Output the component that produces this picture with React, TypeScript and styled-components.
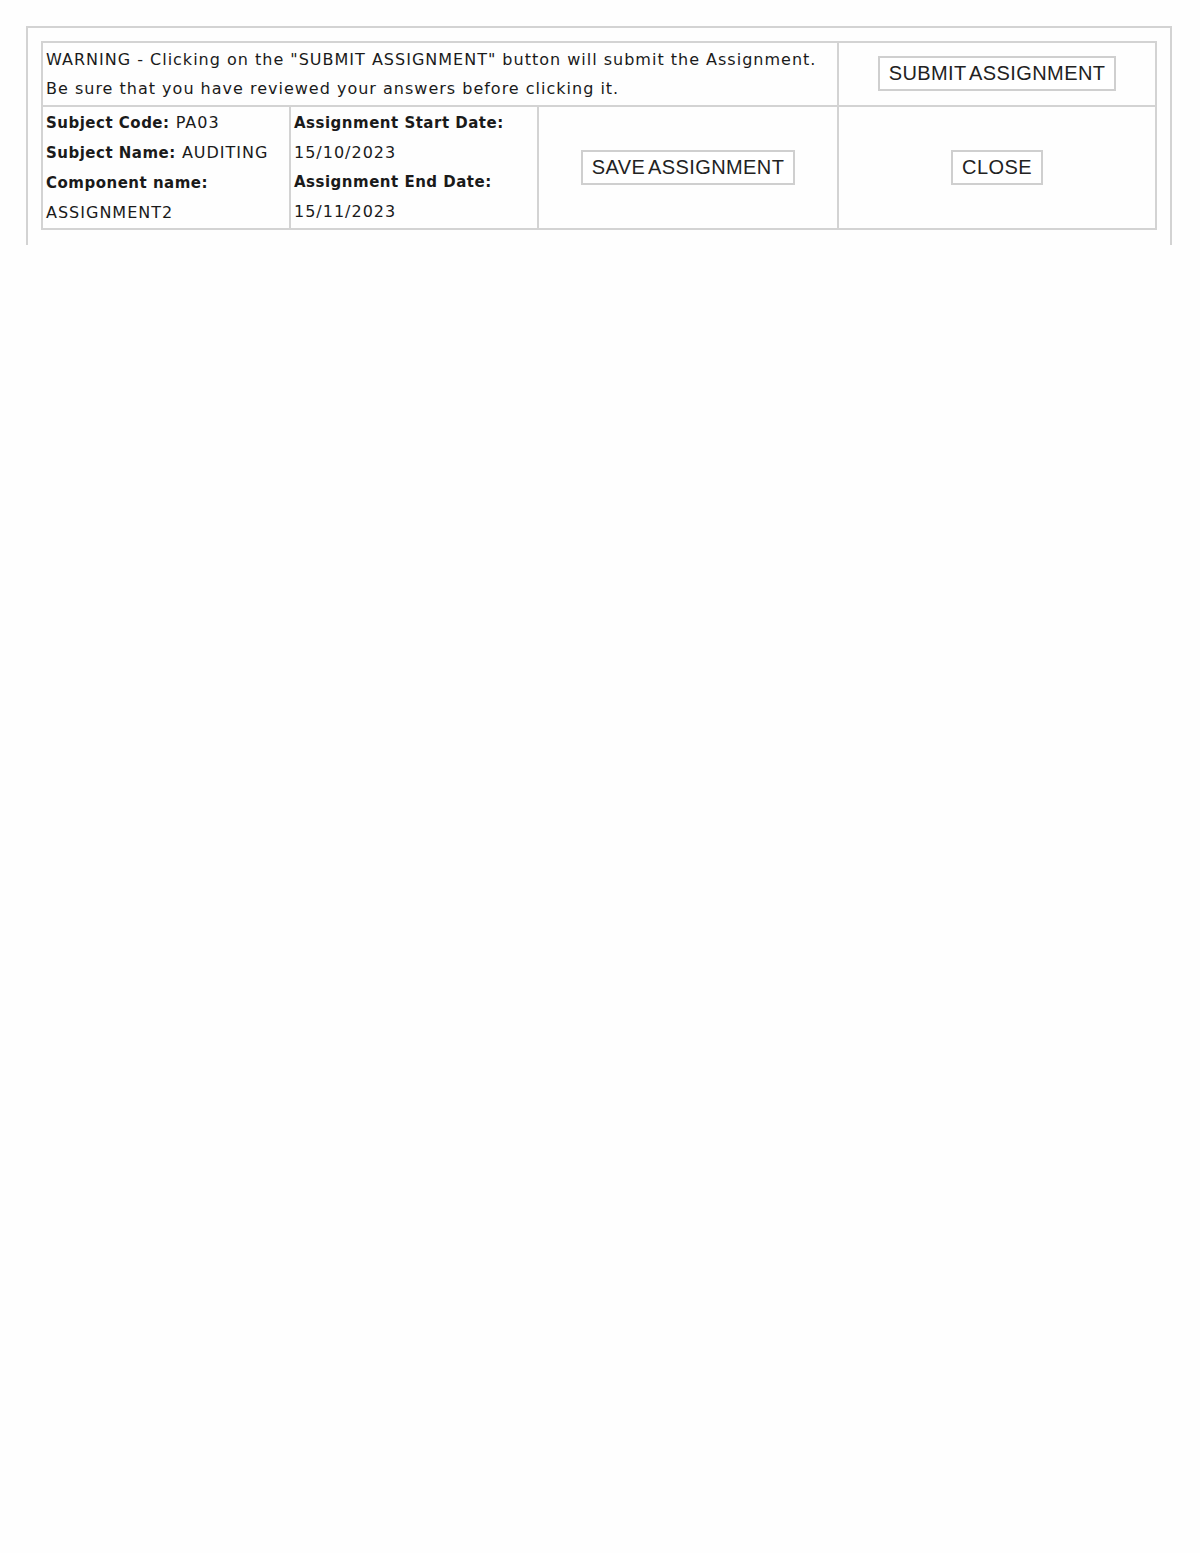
import React from "react";
import styled, { createGlobalStyle } from "styled-components";

const GlobalStyle = createGlobalStyle`
  html, body {
    margin: 0;
    padding: 0;
    background: #fefefe;
  }
  body {
    padding: 26px 28px 0 26px;
    font-family: "DejaVu Sans", Verdana, sans-serif;
    color: #1a1a1a;
  }
`;

const Frame = styled.div`
  border: 2px solid #d3d3d3;
  border-bottom: none;
  padding: 13px 13px 15px 13px;
`;

const InfoTable = styled.table`
  width: 100%;
  border-collapse: collapse;
  table-layout: fixed;
  border: 2px solid #d3d3d3;
  font-size: 16px;
  letter-spacing: 1px;
`;

const Cell = styled.td<{ $center?: boolean }>`
  border: 2px solid #d3d3d3;
  padding: 0 3px 1px;
  line-height: 29px;
  vertical-align: middle;
  white-space: nowrap;
  text-align: ${(p) => (p.$center ? "center" : "left")};
`;

const Label = styled.b`
  font-weight: 700;
  font-size: 15px;
  letter-spacing: 0.5px;
`;

const ActionButton = styled.button`
  font-family: "Liberation Sans", Arial, sans-serif;
  font-size: 20px;
  letter-spacing: 0.4px;
  word-spacing: -2px;
  color: #222;
  background: #fff;
  border: 2px solid #cfcfcf;
  padding: 4px 9px;
  line-height: 23px;
  cursor: pointer;
`;

export default function App() {
  return (
    <>
      <GlobalStyle />
      <Frame>
        <InfoTable>
          <colgroup>
            <col style={{ width: 248 }} />
            <col style={{ width: 248 }} />
            <col style={{ width: 300 }} />
            <col />
          </colgroup>
          <tbody>
            <tr style={{ height: 64 }}>
              <Cell colSpan={3}>
                WARNING - Clicking on the "SUBMIT ASSIGNMENT" button will submit the Assignment.
                <br />
                Be sure that you have reviewed your answers before clicking it.
              </Cell>
              <Cell $center>
                <ActionButton>SUBMIT ASSIGNMENT</ActionButton>
              </Cell>
            </tr>
            <tr style={{ height: 123 }}>
              <Cell>
                <Label>Subject Code:</Label> PA03
                <br />
                <Label>Subject Name:</Label> AUDITING
                <br />
                <Label>Component name:</Label>
                <br />
                ASSIGNMENT2
              </Cell>
              <Cell>
                <Label>Assignment Start Date:</Label>
                <br />
                15/10/2023
                <br />
                <Label>Assignment End Date:</Label>
                <br />
                15/11/2023
              </Cell>
              <Cell $center>
                <ActionButton>SAVE ASSIGNMENT</ActionButton>
              </Cell>
              <Cell $center>
                <ActionButton>CLOSE</ActionButton>
              </Cell>
            </tr>
          </tbody>
        </InfoTable>
      </Frame>
    </>
  );
}
